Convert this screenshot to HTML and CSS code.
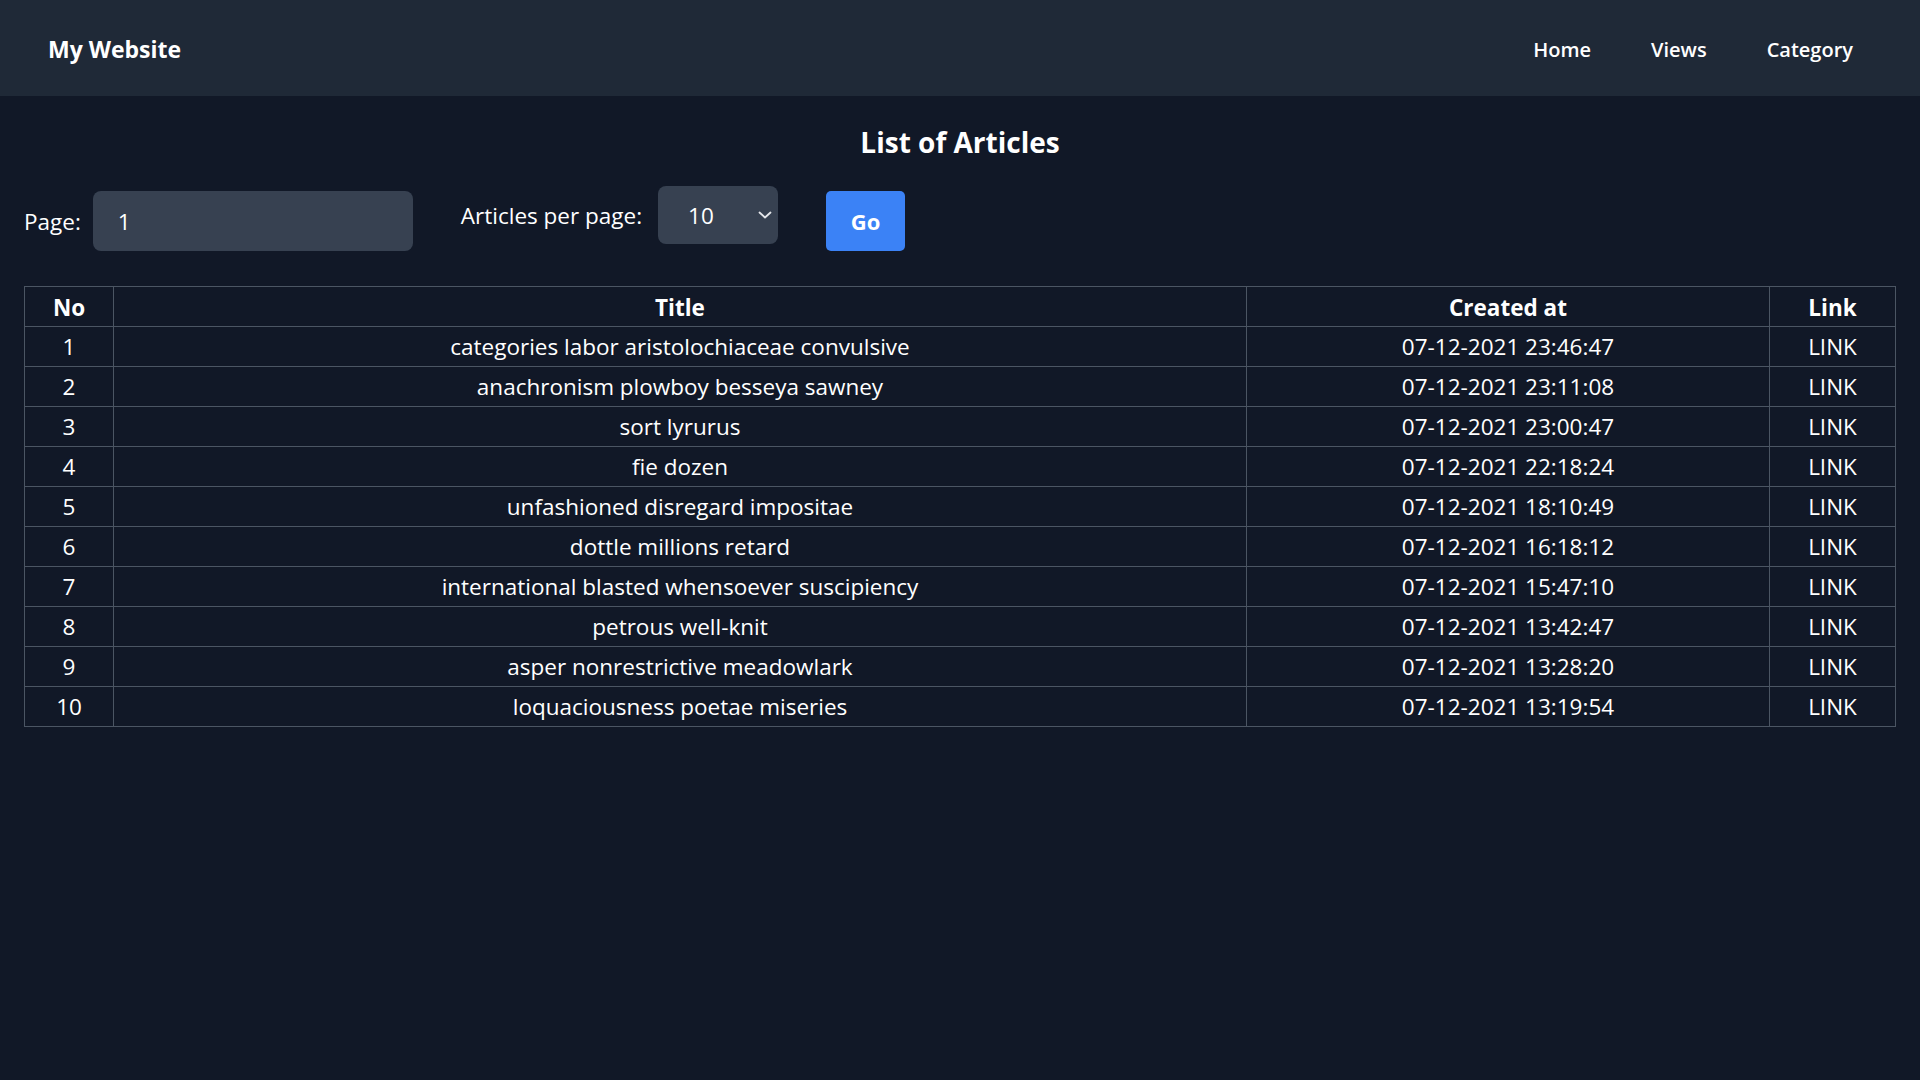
FILE: index.html
```html
<!DOCTYPE html>
<html lang="en">
<head>
    <meta charset="UTF-8">
    <meta name="viewport" content="width=device-width, initial-scale=1.0">
    <title>My Website - List of Articles</title>
    <link rel="stylesheet" href="styles.css">
</head>
<body>

    <header class="topbar">
        <div class="brand">My Website</div>
        <nav class="menu">
            <a href="#">Home</a>
            <a href="#">Views</a>
            <a href="#">Category</a>
        </nav>
    </header>

    <main class="conteudo">
        <h1 class="titulo">List of Articles</h1>

        <form class="controles" onsubmit="return false">
            <div class="campo campo-pagina">
                <label for="pagina">Page:</label>
                <input type="text" id="pagina" class="entrada" value="1">
            </div>
            <div class="campo campo-qtd">
                <label for="porPagina">Articles per page:</label>
                <div class="seletor">
                    <select id="porPagina">
                        <option selected>10</option>
                        <option>20</option>
                        <option>50</option>
                    </select>
                    <svg class="seta" width="14" height="8" viewBox="0 0 14 8"><path d="M1.5 1.5 L7 6.5 L12.5 1.5" fill="none" stroke="#e5e7eb" stroke-width="1.8" stroke-linecap="round" stroke-linejoin="round"/></svg>
                </div>
            </div>
            <button class="botao-go">Go</button>
        </form>

        <table class="artigos">
            <colgroup>
                <col class="col-no">
                <col>
                <col class="col-data">
                <col class="col-link">
            </colgroup>
            <thead>
                <tr><th>No</th><th>Title</th><th>Created at</th><th>Link</th></tr>
            </thead>
            <tbody>
                <tr><td>1</td><td>categories labor aristolochiaceae convulsive</td><td>07-12-2021 23:46:47</td><td><a href="#">LINK</a></td></tr>
                <tr><td>2</td><td>anachronism plowboy besseya sawney</td><td>07-12-2021 23:11:08</td><td><a href="#">LINK</a></td></tr>
                <tr><td>3</td><td>sort lyrurus</td><td>07-12-2021 23:00:47</td><td><a href="#">LINK</a></td></tr>
                <tr><td>4</td><td>fie dozen</td><td>07-12-2021 22:18:24</td><td><a href="#">LINK</a></td></tr>
                <tr><td>5</td><td>unfashioned disregard impositae</td><td>07-12-2021 18:10:49</td><td><a href="#">LINK</a></td></tr>
                <tr><td>6</td><td>dottle millions retard</td><td>07-12-2021 16:18:12</td><td><a href="#">LINK</a></td></tr>
                <tr><td>7</td><td>international blasted whensoever suscipiency</td><td>07-12-2021 15:47:10</td><td><a href="#">LINK</a></td></tr>
                <tr><td>8</td><td>petrous well-knit</td><td>07-12-2021 13:42:47</td><td><a href="#">LINK</a></td></tr>
                <tr><td>9</td><td>asper nonrestrictive meadowlark</td><td>07-12-2021 13:28:20</td><td><a href="#">LINK</a></td></tr>
                <tr><td>10</td><td>loquaciousness poetae miseries</td><td>07-12-2021 13:19:54</td><td><a href="#">LINK</a></td></tr>
            </tbody>
        </table>
    </main>

</body>
</html>
```

FILE: styles.css
```css
* {
    margin: 0;
    padding: 0;
    box-sizing: border-box;
    font-family: "Open Sans", "Noto Sans", sans-serif;
}

body {
    background: #111827;
    color: white;
    min-height: 100vh;
}

a {
    color: white;
    text-decoration: none;
}

.topbar {
    height: 96px;
    background: #1f2937;
    display: flex;
    align-items: center;
    justify-content: space-between;
    padding: 2px 67px 0 48px;
}

.brand {
    font-size: 23px;
    font-weight: bold;
}

.menu {
    display: flex;
    gap: 60px;
}

.menu a {
    font-size: 20px;
    font-weight: 600;
}

.conteudo {
    padding: 24px 24px;
}

.titulo {
    font-size: 28px;
    line-height: 45px;
    text-align: center;
}

.controles {
    margin-top: 21px;
    display: flex;
    align-items: flex-start;
}

.campo {
    display: flex;
    align-items: center;
    font-size: 22.5px;
}

.campo-pagina {
    margin-top: 5px;
    gap: 12px;
}

.campo-qtd {
    margin-left: 48px;
    gap: 16px;
}

.entrada {
    width: 320px;
    height: 60px;
    background: #374151;
    border: none;
    border-radius: 8px;
    color: white;
    font-size: 22.5px;
    padding: 0 25px;
    outline: none;
}

.seletor {
    position: relative;
}

.seletor select {
    appearance: none;
    -webkit-appearance: none;
    width: 120px;
    height: 58px;
    background: #374151;
    border: none;
    border-radius: 8px;
    color: white;
    font-size: 22.5px;
    padding: 0 0 0 30px;
    outline: none;
}

.seta {
    position: absolute;
    right: 6px;
    top: 25px;
    pointer-events: none;
}

.botao-go {
    margin-top: 5px;
    margin-left: 48px;
    width: 79px;
    height: 60px;
    background: #3b82f6;
    border: none;
    border-radius: 5px;
    color: white;
    font-size: 22px;
    font-weight: bold;
    cursor: pointer;
}

.artigos {
    margin-top: 35px;
    width: 100%;
    border-collapse: collapse;
    table-layout: fixed;
    font-size: 22.5px;
}

.col-no {
    width: 89px;
}

.col-data {
    width: 523px;
}

.col-link {
    width: 126px;
}

.artigos th,
.artigos td {
    border: 1px solid #4b5563;
    line-height: 38px;
    padding: 1px 0 0;
    text-align: center;
    white-space: nowrap;
}

.artigos th {
    font-weight: bold;
    line-height: 37px;
    padding-top: 2px;
}
```
